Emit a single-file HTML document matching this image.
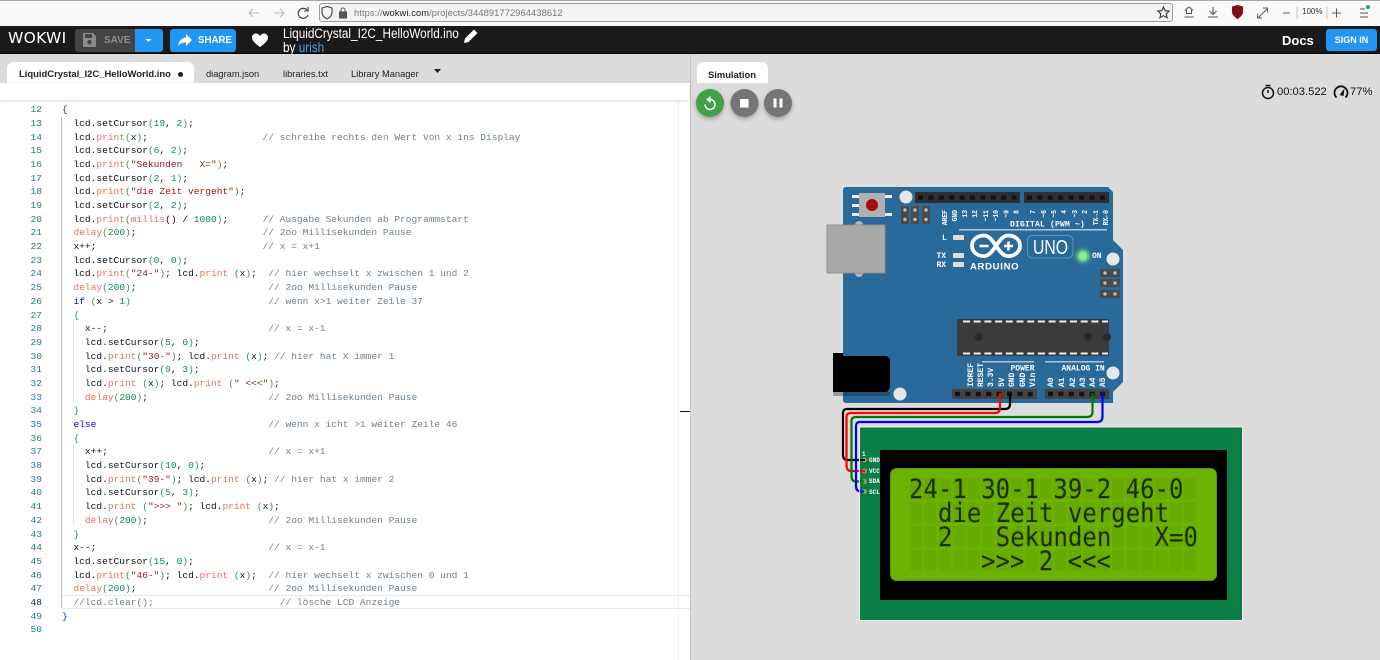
<!DOCTYPE html>
<html><head><meta charset="utf-8"><title>Wokwi</title>
<style>
html,body{margin:0;padding:0;width:1380px;height:660px;overflow:hidden;background:#fff;font-family:"Liberation Sans",sans-serif}
.a{position:absolute}
pre{margin:0;font-family:"Liberation Mono",monospace;font-size:9.55px;line-height:13.68px;position:absolute}
#code{left:62px;top:103.2px;color:#111;width:625px;overflow:hidden}
#nums{left:20px;top:103.2px;width:22px;text-align:right;color:#237893}
i{font-style:normal}
.f{color:#e8705c}.s{color:#a31515}.n{color:#09885a}.c{color:#6f808e}.k{color:#0000ff}.p{color:#2a9a4a}.b{color:#0431fa}
.t{font-size:9.3px;color:#222;top:69px;white-space:nowrap}
</style></head><body>
<!-- browser bar -->
<div class="a" style="left:0;top:0;width:1380px;height:26px;background:#f9f9fa;border-top:1px solid #a8a8a8;box-sizing:border-box"></div>
<div class="a" style="left:319px;top:3px;width:854px;height:19px;background:#f3f3f4;border:1px solid #9a9a9a;border-radius:3px;box-sizing:border-box"></div>
<div class="a" style="left:354px;top:8px;font-size:9.3px;color:#777;white-space:nowrap;letter-spacing:.1px">https://<span style="color:#222">wokwi.com</span>/projects/344891772964438612</div>
<svg class="a" style="left:0;top:0" width="1380" height="26" fill="none" stroke="#555" stroke-width="1.1">
<path d="M249 13h10M253 9l-4 4 4 4M284 13h-10M280 9l4 4-4 4" stroke="#bbb"/>
<path d="M307 10a5 5 0 1 0 1 5M308 7v4h-4" stroke="#333"/>
<path d="M322 8l5-1.500 5 1.500v4c0 4-3 6-5 7-2-1-5-3-5-7z" stroke="#444"/>
<rect x="339.500" y="12" width="7" height="6" fill="#555"/><path d="M341 12v-2a2 2 0 0 1 4 0v2"/>
<path d="M1163.500 7l1.700 3.700 4 .4-3 2.700.9 4-3.600-2.100-3.600 2.100.9-4-3-2.700 4-.4z" stroke="#333"/>
<path d="M1189 7l3.500 3-1 .5v3h-5v-3l-1-.5zM1184.500 17h9"/>
<path d="M1213 7v7M1209.500 11l3.500 3.500 3.500-3.500M1208 17h10"/>
<path d="M1232.500 7l5-1.500 5 1.500v5c0 3-3 5-5 6.500-2-1.500-5-3.500-5-6.500z" fill="#7d1212" stroke="#7d1212"/>
<path d="M1258 18l9-9M1263 8h4.500v4.500M1262 18h-4.500v-4.500" stroke-width=".9"/>
<path d="M1283 13h7" stroke-width="1"/><path d="M1297 7v12M1327 7v12" stroke="#ccc"/>
<path d="M1332 13h9M1336.500 8.500v9" stroke-width="1"/>
<path d="M1360 9h5M1360 13h8M1360 17h8" stroke-width="1.100"/>
<circle cx="1368" cy="7" r="2" fill="#2a9d8f" stroke="none"/>
</svg>
<div class="a" style="left:1302px;top:7px;font-size:8px;color:#333">100%</div>

<!-- wokwi header -->
<div class="a" style="left:0;top:26px;width:1380px;height:28px;background:#1a1a1a;border-bottom:1px solid #000;box-sizing:border-box"></div>
<div class="a" style="left:8px;top:29px;font-family:'DejaVu Sans',sans-serif;font-size:15.500px;color:#fff;letter-spacing:.3px">WOKWI</div>
<div class="a" style="left:75px;top:29px;width:60px;height:23px;background:#444;border-radius:3px 0 0 3px"></div>
<div class="a" style="left:135px;top:29px;width:28px;height:23px;background:#2196f3;border-radius:0 3px 3px 0"></div>
<div class="a" style="left:170px;top:29px;width:66px;height:23px;background:#2196f3;border-radius:3px"></div>
<div class="a" style="left:104px;top:34.500px;font-size:10px;font-weight:bold;color:#8c8c8c">SAVE</div>
<div class="a" style="left:198px;top:34.500px;font-size:9.700px;font-weight:bold;color:#fff">SHARE</div>
<div class="a" style="left:1326px;top:29px;width:51px;height:22px;background:#2196f3;border-radius:3px;color:#fff;font-size:9px;font-weight:bold;text-align:center;line-height:22px">SIGN IN</div>
<div class="a" style="left:1282px;top:33px;font-size:13px;font-weight:bold;color:#fff">Docs</div>
<div class="a" style="left:283px;top:27px;font-size:13.500px;line-height:14px;color:#fff;white-space:nowrap;transform:scaleX(.872);transform-origin:0 0">LiquidCrystal_I2C_HelloWorld.ino<br>by <span style="color:#4a9fe8">urish</span></div>
<svg class="a" style="left:0;top:26px" width="520" height="28" fill="#fff">
<path d="M83 7h10l3 3v11H83zM85 8v4h7V8zM89.500 14a2.200 2.200 0 1 0 .01 0z" fill="#8a8a8a" fill-rule="evenodd"/>
<path d="M145.500 13h6l-3 3z"/>
<path d="M178 20c1-6 4-8 8-8.500V8l6 6-6 6v-3.500c-4 0-6 1-8 3.500z"/>
<path d="M260 21c-5-3.500-8-6.500-8-9.500 0-2.500 2-4 4-4 1.700 0 3 1 4 2.500 1-1.500 2.300-2.500 4-2.500 2 0 4 1.500 4 4 0 3-3 6-8 9.500z"/>
<path d="M465 12.500l9-9 3.500 3.500-9 9-4.500 1z"/>
</svg>

<!-- tabs -->
<div class="a" style="left:0;top:54px;width:690px;height:29px;background:#dcdcdc"></div>
<div class="a" style="left:7px;top:62px;width:187px;height:21px;background:#fff;border-radius:6px 6px 0 0"></div>
<div class="a t" style="left:19px;font-weight:bold;font-size:9.450px">LiquidCrystal_I2C_HelloWorld.ino</div>
<div class="a" style="left:177.500px;top:71.500px;width:5px;height:5px;border-radius:50%;background:#222"></div>
<div class="a t" style="left:206px">diagram.json</div>
<div class="a t" style="left:283px">libraries.txt</div>
<div class="a t" style="left:351px">Library Manager</div>
<svg class="a" style="left:434px;top:69px" width="8" height="6"><path d="M0 0h7l-3.500 4z" fill="#222"/></svg>

<!-- editor -->
<div class="a" style="left:0;top:83px;width:689px;height:577px;background:#fff"></div>
<div class="a" style="left:678px;top:100px;width:1px;height:560px;background:#f0f0f0"></div>
<div class="a" style="left:0;top:83px;width:689px;height:17px;background:#fff;box-shadow:0 1px 3px rgba(0,0,0,.16);z-index:3"></div>
<div class="a" style="left:62px;top:595px;width:628px;height:12px;border:1px solid #e8e8e8;border-width:1px 0;"></div>
<div class="a" style="left:61px;top:117px;width:1px;height:491px;background:#bdbdbd"></div>
<div class="a" style="left:73px;top:321px;width:1px;height:82px;background:#e2e2e2"></div>
<div class="a" style="left:73px;top:445px;width:1px;height:80px;background:#e2e2e2"></div>
<pre id="nums">12
13
14
15
16
17
18
19
20
21
22
23
24
25
26
27
28
29
30
31
32
33
34
35
36
37
38
39
40
41
42
43
44
45
46
47
<span style="color:#0b216f">48</span>
49
50</pre>
<pre id="code"><i class="b">{</i>
  lcd.setCursor<i class="p">(</i><i class="n">19</i>, <i class="n">2</i><i class="p">)</i>;
  lcd.<i class="f">print</i><i class="p">(</i>x<i class="p">)</i>;                    <i class="c">// schreibe rechts den Wert von x ins Display</i>
  lcd.setCursor<i class="p">(</i><i class="n">6</i>, <i class="n">2</i><i class="p">)</i>;
  lcd.<i class="f">print</i><i class="p">(</i><i class="s">"Sekunden   X="</i><i class="p">)</i>;
  lcd.setCursor<i class="p">(</i><i class="n">2</i>, <i class="n">1</i><i class="p">)</i>;
  lcd.<i class="f">print</i><i class="p">(</i><i class="s">"die Zeit vergeht"</i><i class="p">)</i>;
  lcd.setCursor<i class="p">(</i><i class="n">2</i>, <i class="n">2</i><i class="p">)</i>;
  lcd.<i class="f">print</i><i class="p">(</i><i class="f">millis</i>() / <i class="n">1000</i><i class="p">)</i>;      <i class="c">// Ausgabe Sekunden ab Programmstart</i>
  <i class="f">delay</i><i class="p">(</i><i class="n">200</i><i class="p">)</i>;                      <i class="c">// 2oo Millisekunden Pause</i>
  x++;                             <i class="c">// x = x+1</i>
  lcd.setCursor<i class="p">(</i><i class="n">0</i>, <i class="n">0</i><i class="p">)</i>;
  lcd.<i class="f">print</i><i class="p">(</i><i class="s">"24-"</i><i class="p">)</i>; lcd.<i class="f">print</i> <i class="p">(</i>x<i class="p">)</i>;  <i class="c">// hier wechselt x zwischen 1 und 2</i>
  <i class="f">delay</i><i class="p">(</i><i class="n">200</i><i class="p">)</i>;                       <i class="c">// 2oo Millisekunden Pause</i>
  <i class="k">if</i> <i class="p">(</i>x &gt; <i class="n">1</i><i class="p">)</i>                        <i class="c">// wenn x&gt;1 weiter Zeile 37</i>
  <i class="p">{</i>
    x--;                            <i class="c">// x = x-1</i>
    lcd.setCursor<i class="p">(</i><i class="n">5</i>, <i class="n">0</i><i class="p">)</i>;
    lcd.<i class="f">print</i><i class="p">(</i><i class="s">"30-"</i><i class="p">)</i>; lcd.<i class="f">print</i> <i class="p">(</i>x<i class="p">)</i>; <i class="c">// hier hat X immer 1</i>
    lcd.setCursor<i class="p">(</i><i class="n">9</i>, <i class="n">3</i><i class="p">)</i>;
    lcd.<i class="f">print</i> <i class="p">(</i>x<i class="p">)</i>; lcd.<i class="f">print</i> <i class="p">(</i><i class="s">" &lt;&lt;&lt;"</i><i class="p">)</i>;
    <i class="f">delay</i><i class="p">(</i><i class="n">200</i><i class="p">)</i>;                     <i class="c">// 2oo Millisekunden Pause</i>
  <i class="p">}</i>
  <i class="k">else</i>                              <i class="c">// wenn x icht &gt;1 weiter Zeile 46</i>
  <i class="p">{</i>
    x++;                            <i class="c">// x = x+1</i>
    lcd.setCursor<i class="p">(</i><i class="n">10</i>, <i class="n">0</i><i class="p">)</i>;
    lcd.<i class="f">print</i><i class="p">(</i><i class="s">"39-"</i><i class="p">)</i>; lcd.<i class="f">print</i> <i class="p">(</i>x<i class="p">)</i>; <i class="c">// hier hat x immer 2</i>
    lcd.setCursor<i class="p">(</i><i class="n">5</i>, <i class="n">3</i><i class="p">)</i>;
    lcd.<i class="f">print</i> <i class="p">(</i><i class="s">"&gt;&gt;&gt; "</i><i class="p">)</i>; lcd.<i class="f">print</i> <i class="p">(</i>x<i class="p">)</i>;
    <i class="f">delay</i><i class="p">(</i><i class="n">200</i><i class="p">)</i>;                     <i class="c">// 2oo Millisekunden Pause</i>
  <i class="p">}</i>
  x--;                              <i class="c">// x = x-1</i>
  lcd.setCursor<i class="p">(</i><i class="n">15</i>, <i class="n">0</i><i class="p">)</i>;
  lcd.<i class="f">print</i><i class="p">(</i><i class="s">"46-"</i><i class="p">)</i>; lcd.<i class="f">print</i> <i class="p">(</i>x<i class="p">)</i>;  <i class="c">// hier wechselt x zwischen 0 und 1</i>
  <i class="f">delay</i><i class="p">(</i><i class="n">200</i><i class="p">)</i>;                       <i class="c">// 2oo Millisekunden Pause</i>
  <i class="c">//lcd.clear();                      // lösche LCD Anzeige</i>
<i class="b">}</i></pre>
<div class="a" style="left:680px;top:411px;width:10px;height:1px;background:#111"></div>

<!-- simulation panel -->
<div class="a" style="left:690px;top:54px;width:690px;height:606px;background:#dcdcdc;border-left:1px solid #c6c6c6;box-sizing:border-box"></div>
<div class="a" style="left:697px;top:62px;width:71px;height:21px;background:#fff;border-radius:6px 6px 0 0"></div>
<div class="a t" style="left:708px;font-weight:bold;font-size:9.400px">Simulation</div>
<div class="a" style="left:1277px;top:85.500px;font-size:11.200px;color:#111">00:03.522</div>
<div class="a" style="left:1350px;top:85.500px;font-size:11.200px;color:#111">77%</div>

<svg class="a" style="left:690px;top:54px" width="690" height="606" viewBox="690 54 690 606">
<defs><filter id="sh" x="-40%" y="-40%" width="180%" height="180%"><feDropShadow dx="0" dy="2" stdDeviation="2" flood-opacity=".3"/></filter>
<filter id="gl" x="-100%" y="-100%" width="300%" height="300%"><feGaussianBlur stdDeviation="2"/></filter></defs>
<circle cx="710" cy="103" r="14" fill="#43a047" filter="url(#sh)"/>
<circle cx="744.500" cy="103" r="14" fill="#757575" filter="url(#sh)"/>
<circle cx="778" cy="103" r="14" fill="#757575" filter="url(#sh)"/>
<path d="M710 99.500A5 5 0 1 1 705 104.500" fill="none" stroke="#fff" stroke-width="1.400"/><path d="M710.500 96v7l-4.500-3.500z" fill="#fff"/>
<rect x="740" y="99" width="8.500" height="8.500" fill="#fff"/>
<rect x="773.500" y="98.500" width="3" height="9" fill="#fff"/><rect x="779.500" y="98.500" width="3" height="9" fill="#fff"/>
<g fill="none" stroke="#111" stroke-width="1.500"><circle cx="1268" cy="93" r="5.500"/><path d="M1265.500 85.500h5M1268 93v-3"/>
<path d="M1336.500 97.500a6.500 6.500 0 1 1 9 0" stroke-width="1.800"/></g><path d="M1339.500 95l5-6.500-1 7.500z" fill="#111"/>

<!-- arduino board -->
<path d="M846 187H1108L1113 192V240L1123 250V382L1113 392V403H846A3 3 0 0 1 843 400V190A3 3 0 0 1 846 187Z" fill="#2a6a9a"/>
<circle cx="859" cy="225" r="4" fill="#b5b5b5"/><circle cx="859" cy="273" r="4" fill="#b5b5b5"/>
<rect x="827" y="225" width="58" height="48" fill="#a9a9a9" stroke="#8f8f8f"/>
<rect x="833" y="353" width="10" height="39" fill="#000"/>
<rect x="833" y="392" width="10" height="4" fill="#999"/>
<rect x="843" y="392" width="47" height="4" fill="#1f4f75"/>
<path d="M842 356H887L890 359V388L887 392H842Z" fill="#000"/>
<rect x="859" y="193" width="26" height="24" fill="#b0b0b0"/>
<path d="M852 195h7v3h-7zM852 204h7v3h-7zM852 213h7v3h-7zM885 195h7v3h-7zM885 213h7v3h-7z" fill="#eee"/>
<circle cx="872" cy="205" r="6" fill="#a80d0d"/>
<g fill="#e6e6e6"><circle cx="906" cy="197" r="6.500"/><circle cx="1113" cy="259" r="6.500"/><circle cx="1113" cy="373" r="6.500"/><circle cx="900" cy="394" r="6.500"/></g>
<g fill="#4a4a4a"><rect x="901" y="206" width="8" height="18"/><rect x="911" y="206" width="8" height="18"/><rect x="922" y="206" width="8" height="18"/>
<rect x="1100" y="269" width="20" height="8"/><rect x="1100" y="279" width="20" height="8"/><rect x="1100" y="290" width="20" height="8"/></g>
<g fill="#bbb"><circle cx="905" cy="210" r="1.700"/><circle cx="905" cy="219.500" r="1.700"/><circle cx="915" cy="210" r="1.700"/><circle cx="915" cy="219.500" r="1.700"/><circle cx="926" cy="210" r="1.700"/><circle cx="926" cy="219.500" r="1.700"/>
<circle cx="1105" cy="273" r="1.700"/><circle cx="1115" cy="273" r="1.700"/><circle cx="1105" cy="283" r="1.700"/><circle cx="1115" cy="283" r="1.700"/><circle cx="1105" cy="294" r="1.700"/><circle cx="1115" cy="294" r="1.700"/></g>
<!-- headers -->
<g fill="#2f2f2f"><rect x="915" y="192" width="105" height="11"/><rect x="1024" y="192" width="85" height="11"/></g>
<g fill="#444"><rect x="952" y="389" width="85" height="10"/><rect x="1045" y="389" width="64" height="10"/></g>
<g stroke="#151515" stroke-width="4.500" stroke-dasharray="5 5.400" fill="none"><path d="M918 197.500H1020M1027 197.500H1109M955 394H1037M1048 394H1109"/></g>
<!-- chip -->
<rect x="957" y="319" width="152" height="37" rx="1.500" fill="#3a3b3d"/>
<g stroke="#eee" stroke-width="2" stroke-dasharray="7 3.700" fill="none"><path d="M963 321.500H1108M963 353.500H1108"/></g>
<circle cx="979" cy="337" r="4" fill="#2a2a2a"/><circle cx="1088" cy="337" r="4" fill="#2a2a2a"/><circle cx="1107" cy="337" r="4" fill="#2a2a2a"/>
<!-- silk -->
<g fill="#fff" font-family="Liberation Mono,monospace" font-weight="bold">
<g font-size="7.500" text-anchor="end">
<text transform="translate(947,210) rotate(-90) scale(.85,1)">AREF</text><text transform="translate(957,210) rotate(-90) scale(.85,1)">GND</text><text transform="translate(967,210) rotate(-90) scale(.85,1)">13</text><text transform="translate(977,210) rotate(-90) scale(.85,1)">12</text><text transform="translate(988,210) rotate(-90) scale(.85,1)">~11</text><text transform="translate(998,210) rotate(-90) scale(.85,1)">~10</text><text transform="translate(1008.500,210) rotate(-90) scale(.85,1)">~9</text><text transform="translate(1018.500,210) rotate(-90) scale(.85,1)">8</text>
<text transform="translate(1035,210) rotate(-90) scale(.85,1)">7</text><text transform="translate(1046,210) rotate(-90) scale(.85,1)">~6</text><text transform="translate(1056,210) rotate(-90) scale(.85,1)">~5</text><text transform="translate(1066,210) rotate(-90) scale(.85,1)">4</text><text transform="translate(1077,210) rotate(-90) scale(.85,1)">~3</text><text transform="translate(1087,210) rotate(-90) scale(.85,1)">2</text><text transform="translate(1098,210) rotate(-90) scale(.85,1)">TX→1</text><text transform="translate(1108,210) rotate(-90) scale(.85,1)">RX←0</text>
</g>
<g font-size="8">
<text x="1010" y="226.500" letter-spacing=".2">DIGITAL (PWM ~)</text>
<text x="942" y="240">L</text><text x="936.500" y="258">TX</text><text x="936.500" y="267">RX</text><text x="1092" y="258">ON</text>
<text transform="translate(973,387) rotate(-90)">IOREF</text><text transform="translate(983,387) rotate(-90)">RESET</text><text transform="translate(993,387) rotate(-90)">3.3V</text><text transform="translate(1004,387) rotate(-90)">5V</text><text transform="translate(1014,387) rotate(-90)">GND</text><text transform="translate(1025,387) rotate(-90)">GND</text><text transform="translate(1035,387) rotate(-90)">Vin</text>
<text x="1010.500" y="370.500">POWER</text><text x="1061.500" y="370.500">ANALOG IN</text>
<text transform="translate(1053,387) rotate(-90)">A0</text><text transform="translate(1064,387) rotate(-90)">A1</text><text transform="translate(1075,387) rotate(-90)">A2</text><text transform="translate(1085,387) rotate(-90)">A3</text><text transform="translate(1095,387) rotate(-90)">A4</text><text transform="translate(1105,387) rotate(-90)">A5</text>
</g></g>
<path d="M959 229.800H1107M982 361.700H1034M1045 361.700H1104" stroke="#a9c8de" stroke-width="1.500" fill="none"/>
<g fill="#ddd"><rect x="953" y="235" width="11" height="5" rx="1"/><rect x="953" y="253" width="11" height="5" rx="1"/><rect x="953" y="262" width="11" height="5" rx="1"/></g>
<!-- logo -->
<path d="M984 235.500c-7 0-12 4.500-12 10.300s5 10.300 12 10.300c10 0 14-20.600 24-20.600 7 0 12 4.500 12 10.300s-5 10.300-12 10.300c-10 0-14-20.600-24-20.600z" fill="none" stroke="#fff" stroke-width="3.800"/>
<path d="M979.500 244.700h9v2.500h-9zM1004 244.700h9v2.500h-9zM1007.200 241.500h2.500v9h-2.500z" fill="#fff"/>
<text x="970" y="269.500" fill="#fff" font-family="Liberation Sans,sans-serif" font-weight="bold" font-size="9.500" letter-spacing=".7">ARDUINO</text>
<rect x="1027.500" y="235.500" width="45.500" height="22.500" rx="5" fill="none" stroke="#5d93b9"/>
<text x="1033" y="254" fill="#fff" font-family="Liberation Sans,sans-serif" font-size="20" textLength="35" lengthAdjust="spacingAndGlyphs">UNO</text>
<circle cx="1083" cy="256" r="6" fill="#7dff7d" filter="url(#gl)"/><circle cx="1083" cy="256" r="4" fill="#8af08a"/>

<!-- wires -->
<g fill="none" stroke-width="2.200" stroke-linejoin="round">
<path d="M1010 393V404Q1010 409 1005 409H847Q843 409 843 413V455Q843 460 848 460H865" stroke="#000"/>
<path d="M1000 393V408Q1000 413 995 413H851Q846.500 413 846.500 417V465Q846.500 471 851 471H865" stroke="#f00"/>
<path d="M1092.500 393V412Q1092.500 417 1087 417H856Q851.500 417 851.500 421V476Q851.500 481.500 856 481.500H865" stroke="#007800"/>
<path d="M1102.500 393V417Q1102.500 422 1097 422H860Q856 422 856 426V486Q856 491.500 861 491.500H865" stroke="#00f"/>
</g>

<!-- LCD -->
<rect x="859.500" y="427" width="383" height="193.500" fill="#087f45" stroke="#eee"/>
<rect x="880" y="450" width="347" height="150" fill="#000"/>
<rect x="890.500" y="468.500" width="326" height="112" rx="6" fill="#6cb201" stroke="#5a9a00"/>
<g fill="#67aa00">
<path id="r" d="M910 478h12v21h-12zM924.500 478h12v21h-12zM939 478h12v21h-12zM953.300 478h12v21h-12zM967.700 478h12v21h-12zM982.200 478h12v21h-12zM996.600 478h12v21h-12zM1011 478h12v21h-12zM1025.400 478h12v21h-12zM1039.900 478h12v21h-12zM1054.300 478h12v21h-12zM1068.700 478h12v21h-12zM1083.200 478h12v21h-12zM1097.600 478h12v21h-12zM1112 478h12v21h-12zM1126.500 478h12v21h-12zM1140.900 478h12v21h-12zM1155.300 478h12v21h-12zM1169.700 478h12v21h-12zM1184.200 478h12v21h-12z"/>
<use href="#r" y="24"/><use href="#r" y="48"/><use href="#r" y="72"/>
</g>
<g font-family="DejaVu Sans Mono,monospace" font-size="24" fill="#1b2c00">
<text transform="translate(909,498) scale(1,1.130)">24-1&#160;30-1&#160;39-2&#160;46-0</text>
<text transform="translate(938,522) scale(1,1.130)">die&#160;Zeit&#160;vergeht</text>
<text transform="translate(938,546) scale(1,1.130)">2&#160;&#160;&#160;Sekunden&#160;&#160;&#160;X=0</text>
<text transform="translate(981,570) scale(1,1.130)">&gt;&gt;&gt;&#160;2&#160;&lt;&lt;&lt;</text>
</g>
<g fill="#b08d57"><circle cx="864.500" cy="460" r="2.500"/><circle cx="864.500" cy="471" r="2.500"/><circle cx="864.500" cy="481.500" r="2.500"/><circle cx="864.500" cy="491.500" r="2.500"/></g>
<g fill="none" stroke-width="2"><path d="M860 460h5" stroke="#000"/><path d="M860 471h5" stroke="#f00"/><path d="M860 481.500h4" stroke="#007800"/><path d="M860 491.500h4" stroke="#00f"/></g>
<g fill="#fff" font-family="Liberation Mono,monospace" font-size="6" font-weight="bold"><text x="862" y="456">1</text><text x="869" y="462">GND</text><text x="869" y="473">VCC</text><text x="869" y="483">SDA</text><text x="869" y="494">SCL</text></g>
</svg>
</body></html>
